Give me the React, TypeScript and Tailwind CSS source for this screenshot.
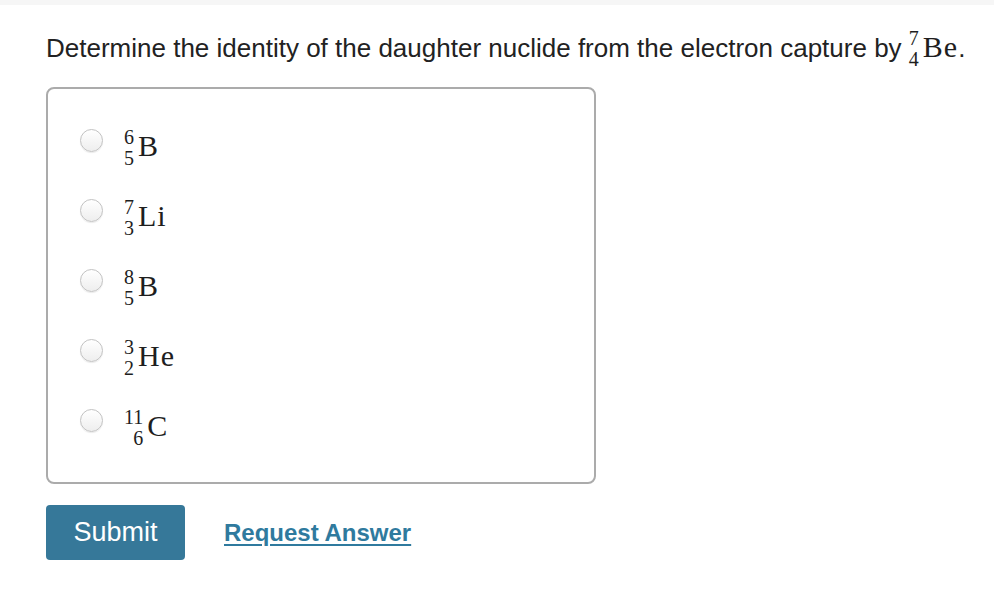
import React from "react";

type Nuclide = { mass: string; atomic: string; symbol: string };

const options: Nuclide[] = [
  { mass: "6", atomic: "5", symbol: "B" },
  { mass: "7", atomic: "3", symbol: "Li" },
  { mass: "8", atomic: "5", symbol: "B" },
  { mass: "3", atomic: "2", symbol: "He" },
  { mass: "11", atomic: "6", symbol: "C" },
];

// prescripts stacked to the left of the element symbol
function NuclideLabel({ n }: { n: Nuclide }) {
  return (
    <span className="flex items-start h-[42px] font-['Liberation_Serif',serif] text-[#1e1e1e]">
      <span className="flex flex-col items-end text-[20px] leading-[21px]">
        <span>{n.mass}</span>
        <span>{n.atomic}</span>
      </span>
      <span className="ml-[4px] mt-[4px] text-[30px] leading-[30px] tracking-[1px]">{n.symbol}</span>
    </span>
  );
}

export default function App() {
  return (
    <div className="min-h-[600px] w-[994px] bg-white font-['Liberation_Sans',Arial,sans-serif]">
      <div className="h-[5px] bg-[#f6f6f6]" />
      <div className="pl-[46px] pt-[28px]">
        <div className="flex items-start h-[30px] text-[26px] leading-[30px] text-[#222] whitespace-nowrap">
          <span>Determine the identity of the daughter nuclide from the electron capture by&nbsp;</span>
          <span className="flex -mt-[5px]">
            <NuclideLabel n={{ mass: "7", atomic: "4", symbol: "Be" }} />
          </span>
          <span>.</span>
        </div>

        <div className="mt-[24px] w-[550px] h-[397px] rounded-[8px] border-2 border-[#ababab] pt-[38px] pl-[32px] flex flex-col gap-[28px]">
          {options.map((o, i) => (
            <label key={i} className="flex items-start h-[42px] cursor-pointer">
              <span className="mt-[2px] w-[23px] h-[23px] rounded-full border border-[#c2c2c2] bg-gradient-to-b from-white to-[#eeeeee] shadow-[0_1px_1px_rgba(0,0,0,0.08)]" />
              <span className="ml-[21px] flex">
                <NuclideLabel n={o} />
              </span>
            </label>
          ))}
        </div>

        <div className="mt-[21px] flex items-center">
          <button className="w-[139px] h-[55px] rounded-[4px] bg-[#367899] text-white text-[27px]">
            Submit
          </button>
          <a className="ml-[39px] text-[24px] font-bold text-[#2f7a9e] underline underline-offset-[3px]">
            Request Answer
          </a>
        </div>
      </div>
    </div>
  );
}
